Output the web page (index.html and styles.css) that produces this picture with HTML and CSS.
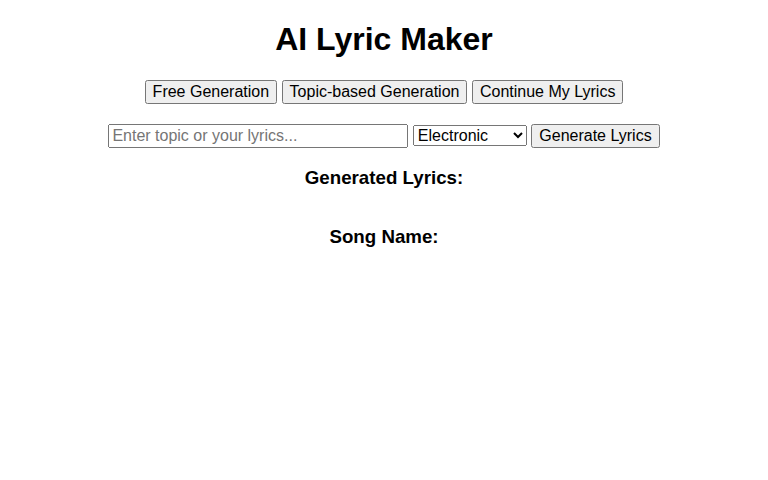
FILE: index.html
```html
<!DOCTYPE html>
<html>
<head>
<meta charset="utf-8">
<link rel="stylesheet" href="styles.css">
</head>
<body>
<div class="app">
  <h1 class="title">AI Lyric Maker</h1>
  <div class="modes">
    <button class="btn">Free Generation</button>
    <button class="btn">Topic-based Generation</button>
    <button class="btn">Continue My Lyrics</button>
  </div>
  <div class="controls">
    <input class="topic" type="text" placeholder="Enter topic or your lyrics...">
    <select class="genre"><option>Electronic</option></select>
    <button class="btn">Generate Lyrics</button>
  </div>
  <h3 class="heading">Generated Lyrics:</h3>
  <div class="lyrics"></div>
  <h3 class="heading">Song Name:</h3>
</div>
</body>
</html>
```
FILE: styles.css
```css
body {
  margin: 0;
  font-family: "Liberation Sans", Arial, sans-serif;
  background: #fff;
  color: #000;
}
.app {
  padding: 21px 20px 20px;
  text-align: center;
}
.title {
  font-size: 32px;
  margin: 0 0 22px;
}
.modes {
  margin: 0 0 20px;
}
.controls {
  margin: 0;
}
.btn, .topic, .genre {
  font-family: "Liberation Sans", Arial, sans-serif;
  font-size: 16px;
}
.topic {
  width: 292px;
}
.genre {
  width: 114px;
}
.heading {
  font-size: 18.72px;
  margin: 19px 0 0;
}
.lyrics {
  min-height: 17.5px;
}
```
